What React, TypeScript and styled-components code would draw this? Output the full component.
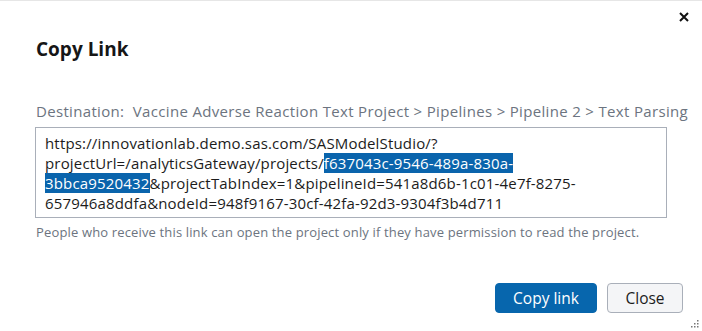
import styled, { createGlobalStyle } from 'styled-components'

const GlobalStyle = createGlobalStyle`
  html, body {
    margin: 0;
    padding: 0;
    background: #ffffff;
  }
  body {
    font-family: "Open Sans", "Noto Sans", "Liberation Sans", sans-serif;
    color: #1c1c1c;
  }
`

const Dialog = styled.div`
  box-sizing: border-box;
  width: 702px;
  height: 331px;
  border-top: 1px solid #e6e6e6;
  position: relative;
  display: flex;
  flex-direction: column;
  padding: 0 36px 0 36px;
`

const Header = styled.div`
  display: flex;
  align-items: center;
  padding-top: 34px;
  height: 27px;
`

const Title = styled.h1`
  margin: 0;
  font-size: 19px;
  font-weight: 700;
  color: #161616;
`

const CloseIcon = styled.button`
  position: absolute;
  top: 8px;
  right: 10px;
  width: 16px;
  height: 16px;
  padding: 0;
  border: none;
  background: none;
  display: flex;
  align-items: center;
  justify-content: center;
  cursor: pointer;
`

const Destination = styled.div`
  margin-top: 40px;
  font-size: 15px;
  letter-spacing: 0.33px;
  color: #6c7480;
  white-space: nowrap;
  line-height: 18px;
`

const LinkBox = styled.div`
  box-sizing: border-box;
  margin-top: 7px;
  margin-left: -1px;
  width: 632px;
  height: 91px;
  border: 1px solid #a9afb9;
  padding: 5px 9px;
  font-size: 15px;
  letter-spacing: 0.17px;
  line-height: 20px;
  color: #1c1c1c;
  white-space: nowrap;
`

const Selected = styled.span`
  background: #0a64ac;
  color: #ffffff;
`

const HelpText = styled.div`
  margin-top: 5px;
  font-size: 13px;
  letter-spacing: 0.15px;
  color: #6c7480;
  white-space: nowrap;
`

const Footer = styled.div`
  margin-top: auto;
  margin-bottom: 18px;
  margin-right: -17px;
  display: flex;
  justify-content: flex-end;
  gap: 10px;
`

const Button = styled.button<{ $primary?: boolean }>`
  box-sizing: border-box;
  height: 30px;
  padding: 0 16px;
  min-width: ${(p) => (p.$primary ? '102px' : '76px')};
  border-radius: 4px;
  font-family: inherit;
  font-size: 15.5px;
  border: 1px solid ${(p) => (p.$primary ? '#0766ad' : '#a9afb9')};
  background: ${(p) => (p.$primary ? '#0766ad' : '#f4f5f7')};
  color: ${(p) => (p.$primary ? '#ffffff' : '#1c1c1c')};
  cursor: pointer;
`

const Grip = styled.svg`
  position: absolute;
  right: 3px;
  bottom: 3px;
`

export default function App() {
  return (
    <>
      <GlobalStyle />
      <Dialog>
        <Header>
          <Title>Copy Link</Title>
        </Header>
        <CloseIcon aria-label="Close">
          <svg width="10" height="10" viewBox="0 0 10 10">
            <path d="M1 1 L9 9 M9 1 L1 9" stroke="#111" strokeWidth="2" />
          </svg>
        </CloseIcon>
        <Destination>
          Destination:&nbsp; Vaccine Adverse Reaction Text Project &gt; Pipelines &gt; Pipeline 2 &gt; Text Parsing
        </Destination>
        <LinkBox>
          https://innovationlab.demo.sas.com/SASModelStudio/?
          <br />
          projectUrl=/analyticsGateway/projects/<Selected>f637043c-9546-489a-830a-</Selected>
          <br />
          <Selected>3bbca9520432</Selected>&amp;projectTabIndex=1&amp;pipelineId=541a8d6b-1c01-4e7f-8275-
          <br />
          657946a8ddfa&amp;nodeId=948f9167-30cf-42fa-92d3-9304f3b4d711
        </LinkBox>
        <HelpText>
          People who receive this link can open the project only if they have permission to read the project.
        </HelpText>
        <Footer>
          <Button $primary>Copy link</Button>
          <Button>Close</Button>
        </Footer>
        <Grip width="8" height="8" viewBox="0 0 8 8">
          <rect x="6" y="0" width="1.5" height="1.5" fill="#777" />
          <rect x="3" y="3" width="1.5" height="1.5" fill="#777" />
          <rect x="6" y="3" width="1.5" height="1.5" fill="#777" />
          <rect x="0" y="6" width="1.5" height="1.5" fill="#777" />
          <rect x="3" y="6" width="1.5" height="1.5" fill="#777" />
          <rect x="6" y="6" width="1.5" height="1.5" fill="#777" />
        </Grip>
      </Dialog>
    </>
  )
}
